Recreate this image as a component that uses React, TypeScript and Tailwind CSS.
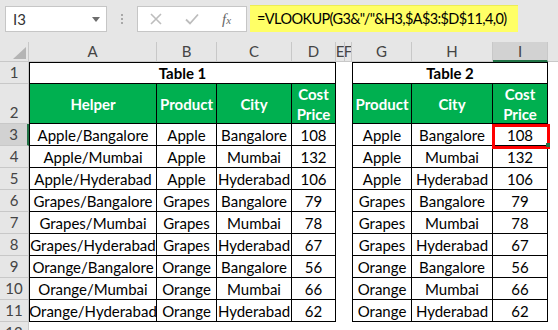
import React from "react";

const t1 = [
  ["Apple/Bangalore", "Apple", "Bangalore", "108"],
  ["Apple/Mumbai", "Apple", "Mumbai", "132"],
  ["Apple/Hyderabad", "Apple", "Hyderabad", "106"],
  ["Grapes/Bangalore", "Grapes", "Bangalore", "79"],
  ["Grapes/Mumbai", "Grapes", "Mumbai", "78"],
  ["Grapes/Hyderabad", "Grapes", "Hyderabad", "67"],
  ["Orange/Bangalore", "Orange", "Bangalore", "56"],
  ["Orange/Mumbai", "Orange", "Mumbai", "66"],
  ["Orange/Hyderabad", "Orange", "Hyderabad", "62"],
];

function RowHead({ n, h, sel }: { n: string; h: string; sel?: boolean }) {
  return (
    <div
      className={
        "w-[29px] shrink-0 flex items-end justify-center pb-[1px] text-[15px] leading-[20px] text-[#444] border-b border-[#c8c8c8] " +
        h +
        (sel
          ? " bg-[#d2d2d2] border-r-2 border-r-[#217346]"
          : " bg-[#e6e6e6] border-r border-r-[#c8c8c8]")
      }
    >
      {n}
    </div>
  );
}

function Cell({
  w,
  b,
  children,
  extra,
}: {
  w: string;
  b: string;
  children?: React.ReactNode;
  extra?: string;
}) {
  return (
    <div
      className={
        "shrink-0 h-full flex items-center justify-center whitespace-nowrap overflow-hidden " +
        w +
        " " +
        b +
        (extra ? " " + extra : "")
      }
    >
      {children}
    </div>
  );
}

export default function App() {
  return (
    <div className="w-[558px] h-[330px] overflow-hidden bg-white font-['Lato',sans-serif] text-black select-none">
      {/* Formula bar */}
      <div className="h-[42px] bg-[#e6e6e6] flex items-start">
        <div className="ml-[5px] mt-[6px] w-[102px] h-[26px] bg-white border border-[#c6c6c6] flex items-center justify-between pl-[7px] pr-[6px] text-[15px] text-[#333]">
          <span>I3</span>
          <svg width="8" height="5" viewBox="0 0 8 5">
            <path d="M0 0 L8 0 L4 5 Z" fill="#6d6d6d" />
          </svg>
        </div>
        <div className="w-[30px] h-[26px] mt-[6px] flex flex-col items-center justify-center gap-[2px]">
          <div className="w-[2px] h-[2px] bg-[#a8a8a8]" />
          <div className="w-[2px] h-[2px] bg-[#a8a8a8]" />
          <div className="w-[2px] h-[2px] bg-[#a8a8a8]" />
        </div>
        <div className="mt-[6px] w-[110px] h-[26px] bg-white border border-[#c6c6c6] flex items-center pl-[12px]">
          <svg width="12" height="12" viewBox="0 0 12 12">
            <path d="M1 1 L11 11 M11 1 L1 11" stroke="#bdbdbd" strokeWidth="1.6" />
          </svg>
          <svg className="ml-[23px]" width="14" height="12" viewBox="0 0 14 12">
            <path d="M1 6.5 L5 10.5 L13 1.5" stroke="#bdbdbd" strokeWidth="1.8" fill="none" />
          </svg>
          <span className="ml-[23px] font-['Liberation_Serif',serif] italic text-[15px] text-[#666] leading-none">
            f<span className="text-[11px]">x</span>
          </span>
        </div>
        <div className="ml-[3px] mt-[5px] w-[268px] h-[27px] bg-[#ffff66] border-t border-[#ecec55] flex items-center pl-[7px] text-[14.5px] tracking-[-0.6px] text-black whitespace-nowrap">
          =VLOOKUP(G3&amp;"/"&amp;H3,$A$3:$D$11,4,0)
        </div>
      </div>

      {/* Column headers */}
      <div className="h-[20px] flex bg-[#e6e6e6] text-[15px] text-[#444] leading-[19px]">
        <div className="w-[29px] shrink-0 border-r border-b border-[#c8c8c8] flex items-end justify-end pr-[2px] pb-[2px]">
          <svg width="13" height="12" viewBox="0 0 13 12">
            <path d="M13 0 L13 12 L0 12 Z" fill="#b4b4b4" />
          </svg>
        </div>
        {[
          ["A", "w-[128px]"],
          ["B", "w-[60px]"],
          ["C", "w-[75px]"],
          ["D", "w-[44px]"],
          ["E", "w-[9px]"],
          ["F", "w-[7px]"],
          ["G", "w-[60px]"],
          ["H", "w-[81px]"],
        ].map(([l, w]) => (
          <div
            key={l}
            className={
              "shrink-0 border-r border-b border-[#c8c8c8] flex justify-center overflow-hidden " + w
            }
          >
            {l}
          </div>
        ))}
        <div className="w-[55px] shrink-0 border-r border-r-[#c8c8c8] border-b-2 border-b-[#217346] bg-[#d2d2d2] flex justify-center">
          I
        </div>
        <div className="w-[10px] shrink-0 border-b border-[#c8c8c8]" />
      </div>

      {/* Row 1 */}
      <div className="h-[22px] flex">
        <RowHead n="1" h="h-[22px]" />
        <Cell w="w-[307px]" b="border border-black" extra="font-bold text-[15px]">
          Table 1
        </Cell>
        <Cell w="w-[16px]" b="" />
        <Cell w="w-[196px]" b="border border-black" extra="font-bold text-[15px]">
          Table 2
        </Cell>
        <Cell w="w-[10px]" b="" />
      </div>

      {/* Row 2 */}
      <div className="h-[40px] flex">
        <RowHead n="2" h="h-[40px]" />
        <div className="flex bg-[#00b050] text-white font-bold text-[15px] leading-[20px]">
          <Cell w="w-[128px]" b="border-l border-r border-b border-black">Helper</Cell>
          <Cell w="w-[60px]" b="border-r border-b border-black">Product</Cell>
          <Cell w="w-[75px]" b="border-r border-b border-black">City</Cell>
          <Cell w="w-[44px]" b="border-r border-b border-black" extra="flex-col">
            <span>Cost</span>
            <span>Price</span>
          </Cell>
        </div>
        <Cell w="w-[16px]" b="" />
        <div className="flex bg-[#00b050] text-white font-bold text-[15px] leading-[20px]">
          <Cell w="w-[60px]" b="border-l border-r border-b border-black">Product</Cell>
          <Cell w="w-[81px]" b="border-r border-b border-black">City</Cell>
          <Cell w="w-[55px]" b="border-r border-b border-black" extra="flex-col">
            <span>Cost</span>
            <span>Price</span>
          </Cell>
        </div>
        <Cell w="w-[10px]" b="" />
      </div>

      {/* Data rows */}
      {t1.map((r, i) => (
        <div key={i} className="h-[22px] flex text-[15px] leading-[20px]">
          <RowHead n={String(i + 3)} h="h-[22px]" sel={i === 0} />
          <Cell w="w-[128px]" b="border-l border-r border-b border-black">{r[0]}</Cell>
          <Cell w="w-[60px]" b="border-r border-b border-black">{r[1]}</Cell>
          <Cell w="w-[75px]" b="border-r border-b border-black">{r[2]}</Cell>
          <Cell w="w-[44px]" b="border-r border-b border-black">{r[3]}</Cell>
          <Cell w="w-[16px]" b="" />
          <Cell w="w-[60px]" b="border-l border-r border-b border-black">{r[1]}</Cell>
          <Cell w="w-[81px]" b="border-r border-b border-black">{r[2]}</Cell>
          <div className="relative w-[55px] h-full shrink-0 border-r border-b border-black flex items-center justify-center">
            {r[3]}
            {i === 0 && (
              <>
                <div className="absolute left-[-1px] top-0 w-[58px] h-[25px] border-[3px] border-[#ff0000] z-10" />
                <div className="absolute left-[53px] top-[19px] w-[4px] h-[4px] bg-[#217346] z-20" />
              </>
            )}
          </div>
          <Cell w="w-[10px]" b="" />
        </div>
      ))}

      {/* Row 12 */}
      <div className="h-[22px] flex">
        <RowHead n="12" h="h-[22px]" />
      </div>
    </div>
  );
}
